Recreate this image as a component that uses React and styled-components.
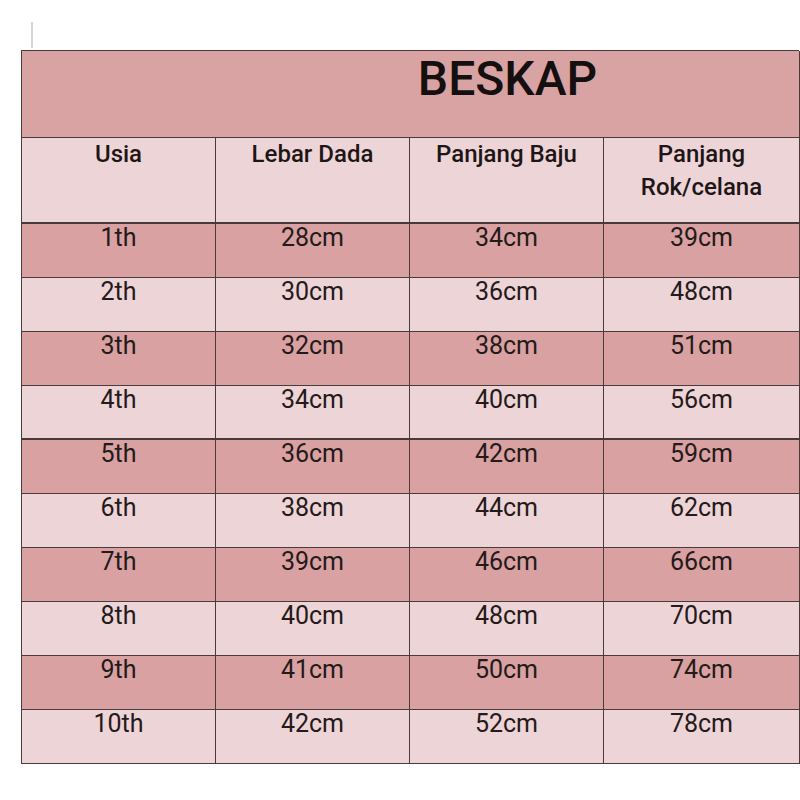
import React from 'react'
import styled, { createGlobalStyle } from 'styled-components'

const GlobalStyle = createGlobalStyle`
body {
  margin: 0;
  background: #ffffff;
  font-family: Roboto, "Liberation Sans", Arial, sans-serif;
}
`

const Page = styled.div`
width: 800px;
height: 800px;
overflow: hidden;
background: #fff;
`

const TopBar = styled.div`
height: 50px;
display: flex;
align-items: flex-end;
padding-left: 31px;
box-sizing: border-box;
`

const Mark = styled.div`
width: 2px;
height: 26px;
margin-bottom: 2px;
background: #d6d6d6;
`

const Table = styled.div`
margin-left: 21px;
width: 778px;
display: grid;
grid-template-columns: 194px 194px 194px 196px;
grid-template-rows: 87px 86px repeat(10, 54px);
border-top: 1px solid #4a3b3b;
border-left: 1px solid #4a3b3b;
box-sizing: border-box;
color: #241a1a;
`

const TitleCell = styled.div`
grid-column: 1 / -1;
background: #d9a3a3;
border-right: 1px solid #4a3b3b;
border-bottom: 1px solid #4a3b3b;
padding-left: 194px;
text-align: center;
font-size: 48px;
font-weight: 500;
line-height: 56px;
color: #151010;
`

const Cell = styled.div`
background: ${p => (p.$dark ? '#d9a1a2' : '#edd4d7')};
border-right: 1px solid #4a3b3b;
border-bottom: ${p => (p.$thick ? 2 : 1)}px solid #4a3b3b;
box-sizing: border-box;
text-align: center;
font-size: 25px;
line-height: 28px;
`

const HeadCell = styled(Cell)`
font-weight: 500;
font-size: 24px;
line-height: 33px;
color: #1e1616;
`

const headers = ['Usia', 'Lebar Dada', 'Panjang Baju', 'Panjang\nRok/celana']

const rows = [
  ['1th', '28cm', '34cm', '39cm'],
  ['2th', '30cm', '36cm', '48cm'],
  ['3th', '32cm', '38cm', '51cm'],
  ['4th', '34cm', '40cm', '56cm'],
  ['5th', '36cm', '42cm', '59cm'],
  ['6th', '38cm', '44cm', '62cm'],
  ['7th', '39cm', '46cm', '66cm'],
  ['8th', '40cm', '48cm', '70cm'],
  ['9th', '41cm', '50cm', '74cm'],
  ['10th', '42cm', '52cm', '78cm'],
]

export default function App() {
  return (
    <Page>
      <GlobalStyle />
      <TopBar>
        <Mark />
      </TopBar>
      <Table>
        <TitleCell>BESKAP</TitleCell>
        {headers.map(h => (
          <HeadCell key={h} $thick>
            {h.split('\n').map(line => (
              <div key={line}>{line}</div>
            ))}
          </HeadCell>
        ))}
        {rows.map((row, i) =>
          row.map((v, j) => (
            <Cell key={i + '-' + j} $dark={i % 2 === 0} $thick={i === 3}>
              {v}
            </Cell>
          ))
        )}
      </Table>
    </Page>
  )
}
